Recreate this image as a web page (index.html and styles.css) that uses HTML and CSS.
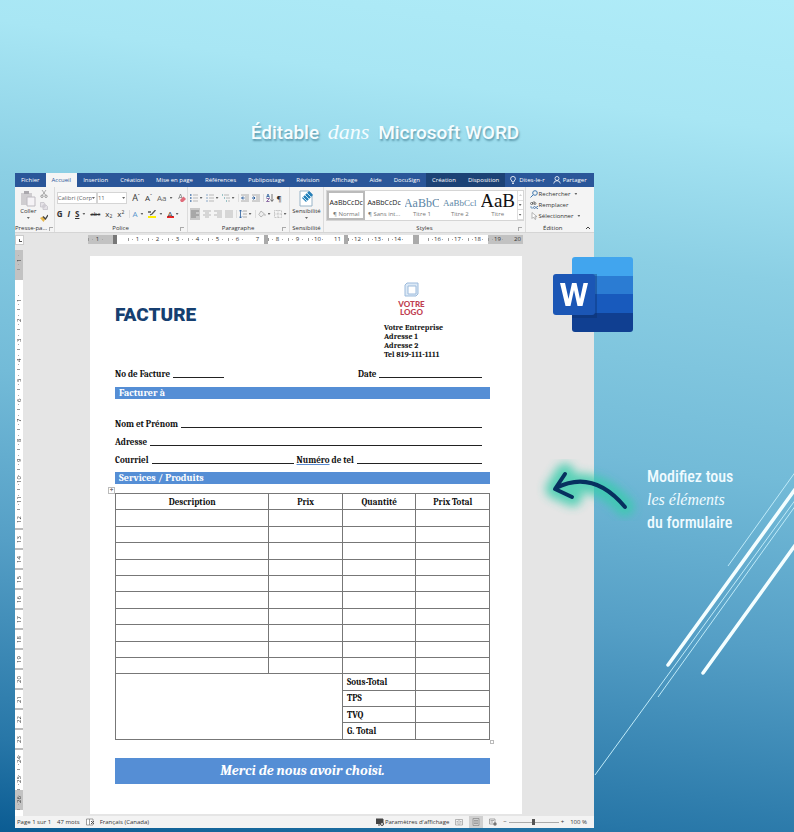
FILE: index.html
```html
<!DOCTYPE html>
<html lang="fr">
<head>
<meta charset="UTF-8">
<meta name="viewport" content="width=device-width, initial-scale=1.0">
<title>Facture éditable dans Microsoft WORD</title>
<link rel="stylesheet" href="styles.css">
</head>
<body>
<header class="banner">
    <h1>Éditable <em>dans</em> Microsoft WORD</h1>
</header>
<main class="stage">
    <div class="word">
        <nav class="tabs">
            <a href="#">Fichier</a>
            <a href="#" class="active">Accueil</a>
            <a href="#">Insertion</a>
            <a href="#">Création</a>
            <a href="#">Mise en page</a>
            <a href="#">Références</a>
            <a href="#">Publipostage</a>
            <a href="#">Révision</a>
            <a href="#">Affichage</a>
            <a href="#">Aide</a>
            <a href="#">DocuSign</a>
            <a href="#" class="context">Création</a>
            <a href="#" class="context">Disposition</a>
            <a href="#" class="tell"><svg class="icon" viewBox="0 0 8 8"><path d="M3 6V5Q1.600 4 1.600 2.800A2.400 2.400 0 0 1 6.400 2.800Q6.400 4 5 5V6ZM3 7.500H5" fill="none" stroke="#fff" stroke-width=".8"/></svg>Dites-le-r</a>
            <a href="#" class="share"><svg class="icon" viewBox="0 0 8 8"><circle cx="4" cy="2.500" r="2" fill="none" stroke="#fff" stroke-width=".8"/><path d="M.7 7.500Q1 4.700 4 4.700Q7 4.700 7.300 7.500" fill="none" stroke="#fff" stroke-width=".8"/></svg>Partager</a>
        </nav>

        <!-- Ruban -->
        <div class="ribbon">
            <section class="group clipboard">
                <div class="tools">
                    <button class="big"><svg viewBox="0 0 16 17"><path d="M1 3H12V15H1Z" fill="#cfcdd0"/><path d="M4 1H9V4H4Z" fill="#aaa8ad"/><path d="M7 7H15V16H7Z" fill="#f5f3f6" stroke="#bdbac0"/></svg><span>Coller</span><i class="drop"></i></button>
                    <div class="stack">
                        <button aria-label="Couper"><svg class="icon" viewBox="0 0 8 8"><path d="M2 0L5.500 5M6 0L2.500 5" stroke="#999" stroke-width=".8"/><circle cx="2" cy="6.300" r="1.200" fill="none" stroke="#999"/><circle cx="6" cy="6.300" r="1.200" fill="none" stroke="#999"/></svg></button>
                        <button aria-label="Copier"><svg class="icon" viewBox="0 0 8 8"><path d="M.5 .5H4L5 2V5H.5ZM3 3H6L7.500 4.500V7.500H3Z" fill="#e4e1e6" stroke="#c0bdc4" stroke-width=".7"/></svg></button>
                        <button aria-label="Reproduire la mise en forme"><svg class="icon" viewBox="0 0 8 8"><path d="M0 4L3 2.500L5.500 5L3.500 8Z" fill="#e5b54b"/><path d="M3 2.500L5.500 5L8 1" fill="none" stroke="#444" stroke-width="1.400"/></svg></button>
                    </div>
                </div>
                <h2 class="launch">Presse-pa...</h2>
            </section>
            <section class="group font">
                <div class="tools rows">
                    <div class="row">
                        <span class="pick family"><select aria-label="Police"><option>Calibri (Corps)</option></select></span>
                        <span class="pick size"><select aria-label="Taille de police"><option>11</option></select></span>
                        <button class="grow">A<sup>ˆ</sup></button>
                        <button class="shrink">A<sup>ˇ</sup></button>
                        <button class="case">Aa<i class="drop"></i></button>
                        <button aria-label="Effacer la mise en forme"><svg class="icon" viewBox="0 0 8 8"><path d="M.5 5L2.500 0L4.500 5M1.200 3.500H3.800" fill="none" stroke="#777" stroke-width=".7"/><path d="M2 6L5.500 2.500L8 5L5 8H3Z" fill="#df6c7b"/></svg></button>
                    </div>
                    <div class="row">
                        <button><b>G</b></button>
                        <button><b><em>I</em></b></button>
                        <button><b><u>S</u></b><i class="drop"></i></button>
                        <button class="strike">abc</button>
                        <button>x<sub>2</sub></button>
                        <button>x<sup>2</sup></button>
                        <button class="effect split">A<i class="drop"></i></button>
                        <button aria-label="Surlignage"><svg class="icon" viewBox="0 0 8 8"><path d="M0 6H8V8H0Z" fill="#ffed00"/><path d="M2 5L4 4L7.500 0M0 2H3" stroke="#555" stroke-width="1.300" fill="none"/></svg><i class="drop"></i></button>
                        <button class="ink">A<i class="drop"></i></button>
                    </div>
                </div>
                <h2 class="launch">Police</h2>
            </section>
            <section class="group paragraph">
                <div class="tools rows">
                    <div class="row">
                        <button aria-label="Puces"><svg class="icon" viewBox="0 0 8 8"><path d="M0 1H1.500M0 4H1.500M0 7H1.500" stroke="#3f6fa8" stroke-width="1.500"/><path d="M3 1H8M3 4H8M3 7H8" stroke="#aaa" stroke-width=".8"/></svg><i class="drop"></i></button>
                        <button aria-label="Numérotation"><svg class="icon" viewBox="0 0 8 8"><path d="M1 0V2M1 3V5M1 6V8" stroke="#6f95bd" stroke-width=".8"/><path d="M3 1H8M3 4H8M3 7H8" stroke="#aaa" stroke-width=".8"/></svg><i class="drop"></i></button>
                        <button aria-label="Liste à plusieurs niveaux"><svg class="icon" viewBox="0 0 8 8"><path d="M0 1H1M2 4H3M4 7H5" stroke="#3f8f98" stroke-width="1.200"/><path d="M2 1H7M4 4H8M6 7H8" stroke="#aaa" stroke-width=".8"/></svg><i class="drop"></i></button>
                        <button class="split" aria-label="Diminuer le retrait"><svg class="icon" viewBox="0 0 8 8"><path d="M0 1H8M4 3H8M4 5H8M0 7H8" stroke="#999" stroke-width=".8"/><path d="M3.500 4H1M2 2.500L.5 4L2 5.500" stroke="#285d9c" fill="none"/></svg></button>
                        <button aria-label="Augmenter le retrait"><svg class="icon" viewBox="0 0 8 8"><path d="M0 1H8M4 3H8M4 5H8M0 7H8" stroke="#999" stroke-width=".8"/><path d="M0 4H2.500M1.500 2.500L3 4L1.500 5.500" stroke="#285d9c" fill="none"/></svg></button>
                        <button class="split" aria-label="Trier"><svg class="icon" viewBox="0 0 8 8"><path d="M.5 3.500L2 0L3.500 3.500M1 2.500H3" fill="none" stroke="#285d9c" stroke-width=".8"/><path d="M.5 4.500H3.500L.5 7.500H3.500" fill="none" stroke="#744b91" stroke-width=".8"/><path d="M6 0V7M4.500 5.500L6 7.500L7.500 5.500" stroke="#555" fill="none" stroke-width=".8"/></svg></button>
                        <button class="pilcrow">¶</button>
                    </div>
                    <div class="row">
                        <button class="on" aria-label="Aligner à gauche"><svg class="icon" viewBox="0 0 8 8"><path d="M0 1H8M0 3H5M0 5H8M0 7H5" stroke="#777" stroke-width=".8"/></svg></button>
                        <button aria-label="Centrer"><svg class="icon" viewBox="0 0 8 8"><path d="M0 1H8M2 3H6M0 5H8M2 7H6" stroke="#aaa" stroke-width=".8"/></svg></button>
                        <button aria-label="Aligner à droite"><svg class="icon" viewBox="0 0 8 8"><path d="M0 1H8M3 3H8M0 5H8M3 7H8" stroke="#aaa" stroke-width=".8"/></svg></button>
                        <button aria-label="Justifier"><svg class="icon" viewBox="0 0 8 8"><path d="M0 1H8M0 3H8M0 5H8M0 7H8" stroke="#aaa" stroke-width=".8"/></svg></button>
                        <button class="split" aria-label="Interligne"><svg class="icon" viewBox="0 0 8 8"><path d="M1.500 0V8M0 1.500L1.500 0L3 1.500M0 6.500L1.500 8L3 6.500" stroke="#285d9c" fill="none" stroke-width=".8"/><path d="M4 1H8M4 4H8M4 7H8" stroke="#999" stroke-width=".8"/></svg><i class="drop"></i></button>
                        <button class="split" aria-label="Trame de fond"><svg class="icon" viewBox="0 0 8 8"><path d="M3 1L6.500 4L3 7L.8 4.500ZM7 4V6" fill="#eee" stroke="#aaa" stroke-width=".8"/></svg><i class="drop"></i></button>
                        <button aria-label="Bordures"><svg class="icon" viewBox="0 0 8 8"><path d="M.5 .5H7.500V7.500H.5ZM4 0V8M0 4H8" fill="none" stroke="#bbb" stroke-width=".8" stroke-dasharray="1 .5"/></svg><i class="drop"></i></button>
                    </div>
                </div>
                <h2 class="launch">Paragraphe</h2>
            </section>
            <section class="group sensitivity">
                <div class="tools">
                    <button class="big"><svg viewBox="0 0 16 17"><path d="M2 1H11L14 4V16H2Z" fill="#fff" stroke="#98b4c8"/><path d="M4 8L11 1L15 5L8 12Z" fill="#2680b9"/><path d="M5 7L9 11M7 5L11 9M9 3L13 7" stroke="#bde5f5"/></svg><span>Sensibilité</span><i class="drop"></i></button>
                </div>
                <h2>Sensibilité</h2>
            </section>
            <section class="group styles">
                <div class="tools">
                    <div class="gallery">
                        <button class="selected"><span>AaBbCcDc</span><small>¶ Normal</small></button>
                        <button><span>AaBbCcDc</span><small>¶ Sans int...</small></button>
                        <button class="title1"><span>AaBbC</span><small>Titre 1</small></button>
                        <button class="title2"><span>AaBbCcl</span><small>Titre 2</small></button>
                        <button class="title"><span>AaB</span><small>Titre</small></button>
                        <div class="scroll">
                            <button aria-label="Monter"><i class="drop up faded"></i></button>
                            <button aria-label="Descendre"><i class="drop"></i></button>
                            <button aria-label="Autres styles"><i class="drop"></i></button>
                        </div>
                    </div>
                </div>
                <h2 class="launch">Styles</h2>
            </section>
            <section class="group edit">
                <div class="tools rows">
                    <button><svg class="icon" viewBox="0 0 8 8"><circle cx="5" cy="3" r="2.300" fill="none" stroke="#3f78af"/><path d="M3.200 4.800L.5 7.500" stroke="#3f78af"/></svg>Rechercher<i class="drop"></i></button>
                    <button><svg class="icon" viewBox="0 0 8 8"><circle cx="1.500" cy="2.500" r="1" fill="none" stroke="#555" stroke-width=".7"/><path d="M2.500 1V3.500M4 0V3.500" stroke="#555" stroke-width=".7"/><circle cx="5" cy="2.500" r="1" fill="none" stroke="#555" stroke-width=".7"/><circle cx="4.500" cy="6.500" r="1" fill="none" stroke="#285d9c" stroke-width=".7"/><path d="M8 5.500Q6.500 5 6.500 6.500Q6.500 8 8 7.500" fill="none" stroke="#285d9c" stroke-width=".7"/><path d="M1 5V7H3" fill="none" stroke="#3f78af" stroke-width=".7"/></svg>Remplacer</button>
                    <button><svg class="icon" viewBox="0 0 8 8"><path d="M2 .5V6.500L3.500 5L5 7.500L6 7L4.800 4.700H7Z" fill="#fff" stroke="#999" stroke-width=".7"/></svg>Sélectionner<i class="drop"></i></button>
                </div>
                <h2>Édition</h2>
            </section>
            <button class="collapse" aria-label="Réduire le ruban"><svg viewBox="0 0 6 4"><path d="M1 3L3 1L5 3" fill="none" stroke="#444"/></svg></button>
        </div>

        <!-- Règle horizontale -->
        <div class="ruler-bar">
            <span class="corner"></span>
            <div class="ruler">
                <span class="out">1</span><span class="mark">&nbsp;</span><span>1</span><span>2</span><span>3</span><span>4</span><span>5</span><span>6</span><span class="stop">7</span><span>8</span><span>9</span><span>10</span><span class="stop">11</span><span>12</span><span>13</span><span>14</span><span class="notch">&nbsp;</span><span>16</span><span>17</span><span>18</span><span class="out">19</span><span class="end">20</span>
            </div>
        </div>

        <div class="workspace">
            <div class="ruler-side">
                <span class="out">1</span><span class="first">&nbsp;</span><span>1</span><span>2</span><span>3</span><span>4</span><span>5</span><span>6</span><span>7</span><span>8</span><span>9</span><span>10</span><span>11</span><span class="rowmark">12</span><span class="rowmark">13</span><span class="rowmark">14</span><span class="rowmark">15</span><span class="rowmark">16</span><span class="rowmark">17</span><span class="rowmark">18</span><span class="rowmark">19</span><span class="rowmark">20</span><span class="rowmark">21</span><span class="rowmark">22</span><span class="rowmark">23</span><span>24</span><span>25</span><span class="out">26</span>
            </div>
            <div class="desk">
                <article class="page">
                    <div class="letterhead">
                        <h2>FACTURE</h2>
                        <div class="company">
                            <div class="logo">
                                <svg viewBox="0 0 15 15"><path d="M1 3L3 1H14V12L12 14H1Z" fill="#dce9f6" stroke="#9dbbdc"/><path d="M4 4H12V12H4Z" fill="#fff" stroke="#9dbbdc"/></svg>
                                <strong>VOTRE<br>LOGO</strong>
                            </div>
                            <address>Votre Entreprise<br>Adresse 1<br>Adresse 2<br>Tel 819-111-1111</address>
                        </div>
                    </div>
                    <form>
                        <div class="line spread">
                            <div class="field number"><label for="numero">No de Facture</label><input id="numero" type="text"></div>
                            <div class="field date"><label for="date">Date</label><input id="date" type="text"></div>
                        </div>
                        <h3>Facturer à</h3>
                        <div class="customer">
                            <div class="line field"><label for="nom">Nom et Prénom</label><input id="nom" type="text"></div>
                            <div class="line field"><label for="adresse">Adresse</label><input id="adresse" type="text"></div>
                            <div class="line">
                                <div class="field mail"><label for="courriel">Courriel</label><input id="courriel" type="text"></div>
                                <div class="field phone"><label for="tel"><u>Numéro</u> de tel</label><input id="tel" type="text"></div>
                            </div>
                        </div>
                        <h3>Services / Produits</h3>
                        <div class="items">
                            <span class="handle">+</span>
                            <table>
                                <colgroup><col class="wide"><col><col><col></colgroup>
                                <tbody>
                                    <tr><th>Description</th><th>Prix</th><th>Quantité</th><th>Prix Total</th></tr>
                                    <tr><td></td><td></td><td></td><td></td></tr>
                                    <tr><td></td><td></td><td></td><td></td></tr>
                                    <tr><td></td><td></td><td></td><td></td></tr>
                                    <tr><td></td><td></td><td></td><td></td></tr>
                                    <tr><td></td><td></td><td></td><td></td></tr>
                                    <tr><td></td><td></td><td></td><td></td></tr>
                                    <tr><td></td><td></td><td></td><td></td></tr>
                                    <tr><td></td><td></td><td></td><td></td></tr>
                                    <tr><td></td><td></td><td></td><td></td></tr>
                                    <tr><td></td><td></td><td></td><td></td></tr>
                                    <tr><td colspan="2" rowspan="4"></td><th class="total">Sous-Total</th><td></td></tr>
                                    <tr><th class="total">TPS</th><td></td></tr>
                                    <tr><th class="total">TVQ</th><td></td></tr>
                                    <tr><th class="total">G. Total</th><td></td></tr>
                                </tbody>
                            </table>
                            <span class="resize"></span>
                        </div>
                    </form>
                    <p class="thanks">Merci de nous avoir choisi.</p>
                </article>
            </div>
        </div>

        <footer class="status">
            <span>Page 1 sur 1</span>
            <span>47 mots</span>
            <svg class="icon" viewBox="0 0 8 8"><path d="M.5 1H3.500V7H.5ZM3.500 1H7V7H3.500" fill="#fff" stroke="#777" stroke-width=".7"/><path d="M5 3L8 6M8 3L5 6" stroke="#555"/></svg>
            <span class="lang">Français (Canada)</span>
            <button class="display"><svg class="icon" viewBox="0 0 8 8"><path d="M0 1H7V5.500H0ZM2 7H4" fill="#444" stroke="#444"/><circle cx="6" cy="6" r="1.500" fill="#eee" stroke="#444"/></svg>Paramètres d'affichage</button>
            <button aria-label="Lecture"><svg class="icon" viewBox="0 0 8 8"><path d="M.5 1.500H4V7H.5ZM4 1.500H7.500V7H4M1.500 3.500H3M1.500 5H3M5 3.500H6.500M5 5H6.500" fill="none" stroke="#999" stroke-width=".7"/></svg></button>
            <button class="on" aria-label="Page"><svg class="icon" viewBox="0 0 8 8"><path d="M1 .5H7V7.500H1ZM2 2.500H6M2 4H6M2 5.500H6" fill="none" stroke="#888" stroke-width=".7"/></svg></button>
            <button aria-label="Web"><svg class="icon" viewBox="0 0 8 8"><path d="M.5 1H6V6H.5ZM1.500 2.500H5M1.500 4H4" fill="none" stroke="#888" stroke-width=".7"/><circle cx="6" cy="6" r="1.700" fill="#777"/></svg></button>
            <div class="zoom"><button>−</button><input type="range" aria-label="Zoom" min="0" max="100" value="50"><button>+</button></div>
            <span class="percent">100 %</span>
        </footer>
    </div>

    <aside class="side">
        <svg class="streaks" viewBox="0 0 200 659" fill="none">
            <path d="M134 393L202 298M1 602L202 326M64 524L202 332" stroke="#bfeaf8" stroke-width="1"/>
            <path d="M74 492L202 315M109 500L202 371" stroke="#f4feff" stroke-width="3.500" stroke-linecap="round"/>
        </svg>
        <svg class="word-logo" viewBox="0 0 82 78">
            <defs><clipPath id="sheet"><rect x="19" y="1" width="61" height="75" rx="3"/></clipPath></defs>
            <g clip-path="url(#sheet)">
                <path d="M19 1H80V20H19Z" fill="#41a5ee"/><path d="M19 20H80V38H19Z" fill="#2b7cd3"/>
                <path d="M19 38H80V57H19Z" fill="#185abd"/><path d="M19 57H80V76H19Z" fill="#103f91"/>
                <path d="M19 18H44V62H19Z" fill="#0b2b62" opacity=".35"/>
            </g>
            <rect x="0" y="18" width="42" height="41" rx="3" fill="#1b56b5"/>
            <path d="M7 27H12L15.500 43L19 27H23.500L27 43L30.500 27H35L29.500 50H24.500L21 34L17.500 50H12.500Z" fill="#fff"/>
        </svg>
        <svg class="arrow" viewBox="0 0 110 80">
            <defs><filter id="glow" x="-30%" y="-40%" width="160%" height="180%"><feGaussianBlur stdDeviation="5"/></filter></defs>
            <path d="M20 39Q58 21 90 57M30 23L20 39L38 47" fill="none" stroke="#37ccac" stroke-width="19" stroke-linecap="round" stroke-linejoin="round" filter="url(#glow)" opacity=".8"/>
            <path d="M21 38Q58 19 90 57M30 24L20 39L37 47" fill="none" stroke="#07305f" stroke-width="4" stroke-linecap="round" stroke-linejoin="round"/>
        </svg>
        <p>Modifiez tous<br><em>les éléments</em><br>du formulaire</p>
    </aside>
</main>
</body>
</html>
```

FILE: styles.css
```css
* {
    box-sizing: border-box;
}
body {
    margin: 0;
    min-height: 100vh;
    display: flex;
    flex-direction: column;
    font-family: "Open Sans", "Noto Sans", sans-serif;
    font-size: 6px;
    line-height: 8px;
    color: #333;
    background: linear-gradient(188deg, #b0ecf8 0%, #a8e6f4 14%, #8bcfe4 30%, #73bbd8 51%, #559fc6 69%, #2877a8 90%, #0b5c93 100%);
}
h1, h2, h3, p {
    margin: 0;
}
button, input, select {
    font: inherit;
    color: inherit;
    border: 0;
    padding: 0;
    margin: 0;
    background: none;
}
button {
    display: flex;
    align-items: center;
    justify-content: center;
}
.banner {
    padding: 120px 24px 29px 0;
    text-align: center;
}
.banner h1 {
    height: 24px;
    font-family: Roboto, sans-serif;
    font-size: 19px;
    font-weight: 500;
    line-height: 24px;
    color: #f5fdff;
    text-shadow: 1px 2px 2px rgba(50, 110, 130, 0.6);
}
.banner em {
    margin: 0 4px;
    font-family: "Liberation Serif", serif;
    font-size: 22px;
    font-weight: 400;
    text-shadow: none;
}
.stage {
    flex: 1;
    display: flex;
    padding-left: 15px;
}
.word {
    flex: 1;
    min-width: 0;
    margin-bottom: 4px;
    display: flex;
    flex-direction: column;
    background: #e5e5e5;
}
.icon {
    width: 8px;
    height: 8px;
    flex: none;
}
.drop {
    width: 3px;
    height: 2px;
    margin-left: 3px;
    background: #666;
    clip-path: polygon(0 0, 100% 0, 50% 100%);
}
.up {
    transform: rotate(180deg);
}
.faded {
    opacity: 0.3;
}

/* Onglets */
.tabs {
    display: flex;
    height: 14px;
    background: #2a5699;
}
.tabs a {
    display: flex;
    align-items: center;
    padding: 0 6px;
    color: #fff;
    text-decoration: none;
    white-space: nowrap;
}
.tabs .active {
    background: #f5f5f5;
    color: #2a5699;
}
.tabs .context {
    background: #1c4275;
}
.tabs .tell, .tabs .share {
    gap: 2px;
    padding: 0 4px;
}

/* Ruban */
.ribbon {
    position: relative;
    display: flex;
    height: 46px;
    background: #f4f4f4;
    border-bottom: 1px solid #d5d5d5;
}
.group {
    display: flex;
    flex-direction: column;
    min-width: 0;
    border-right: 1px solid #dcdcdc;
}
.group h2 {
    position: relative;
    font-size: 6px;
    font-weight: 400;
    line-height: 8px;
    text-align: center;
    white-space: nowrap;
}
.launch::after {
    content: "";
    position: absolute;
    right: 3px;
    top: 3px;
    width: 3px;
    height: 3px;
    border: 1px solid #aaa;
    border-width: 1px 0 0 1px;
}
.clipboard { flex: 39 1 0; }
.font { flex: 133 1 0; }
.paragraph { flex: 102 1 0; }
.sensitivity { flex: 34 1 0; }
.styles { flex: 202 1 0; }
.edit { flex: 69 1 0; }
.clipboard .launch {
    text-align: left;
}
.clipboard .launch::after {
    right: 1px;
}
.tools {
    display: flex;
    height: 38px;
    padding: 3px 1px 0 2px;
}
.rows {
    flex-direction: column;
    gap: 4px;
    padding-top: 5px;
}
.row {
    display: flex;
    align-items: center;
    gap: 3px;
    height: 12px;
}
.big {
    flex: 1;
    flex-direction: column;
    justify-content: flex-start;
}
.big svg {
    width: 16px;
    height: 17px;
}
.big .drop {
    margin: 2px 0 0;
}
.stack {
    display: flex;
    flex-direction: column;
    gap: 4px;
    padding-right: 5px;
}
.font .row {
    font-size: 8px;
    gap: 5px;
}
.font sup, .font sub {
    font-size: 5px;
    line-height: 4px;
}
.font sub {
    align-self: flex-end;
}
.font sup {
    align-self: flex-start;
}
.pick {
    display: flex;
    align-items: center;
    height: 12px;
    background: #fff;
    border: 1px solid #d5d5d5;
}
.font .pick {
    font-size: 6px;
}
.pick::after {
    content: "";
    width: 3px;
    height: 2px;
    margin-right: 1px;
    flex: none;
    background: #666;
    clip-path: polygon(0 0, 100% 0, 50% 100%);
}
.pick select {
    width: 100%;
    min-width: 0;
    appearance: none;
    color: #666;
}
.family {
    width: 44px;
}
.font .row .size {
    width: 33px;
    margin-left: -5px;
}
.grow {
    font-size: 9px;
}
.case {
    color: #666;
}
.strike {
    font-size: 6px;
    text-decoration: line-through;
}
.effect {
    color: #5b94cd;
}
.ink {
    color: #444;
    background: linear-gradient(#e22, #e22) 0 100% / 7px 2px no-repeat;
}
.split {
    border-left: 1px solid #ddd;
    padding-left: 2px;
}
.paragraph .drop {
    margin-left: 2px;
}
.pilcrow {
    font-size: 8px;
}
.on {
    background: #c9c9c9;
    padding: 2px 1px;
}
.sensitivity .tools {
    padding: 3px 0 0;
}
.gallery {
    display: flex;
    width: 100%;
    height: 31px;
    background: #fff;
    border: 1px solid #d5d5d5;
}
.gallery > button {
    flex: 1;
    min-width: 0;
    flex-direction: column;
    justify-content: flex-end;
    overflow: hidden;
    white-space: nowrap;
    border: 2px solid transparent;
    font-size: 7px;
    color: #222;
}
.gallery .selected {
    border-color: #bbb;
}
.gallery span {
    line-height: 14px;
}
.gallery small {
    font-size: 6px;
    line-height: 8px;
    color: #777;
}
.title1 span, .title2 span, .title span {
    font-family: "Liberation Serif", serif;
    color: #5b86a6;
}
.title1 span {
    font-size: 12px;
}
.title2 span {
    font-size: 9px;
}
.gallery .title span {
    font-size: 19px;
    line-height: 18px;
    color: #111;
}
.scroll {
    width: 6px;
    display: flex;
    flex-direction: column;
    border-left: 1px solid #ddd;
}
.scroll button {
    flex: 1;
    border-bottom: 1px solid #ddd;
}
.scroll .drop {
    margin: 0;
}
.edit .tools {
    gap: 3px;
    padding: 3px 0 0 4px;
}
.edit button {
    justify-content: flex-start;
    gap: 1px;
    height: 8px;
}
.edit {
    border-right: 0;
}
.edit h2 {
    padding-right: 14px;
}
.collapse {
    position: absolute;
    right: 3px;
    bottom: 2px;
}
.collapse svg {
    width: 6px;
    height: 4px;
}

/* Règles */
.ruler-bar {
    display: flex;
    justify-content: center;
    position: relative;
    height: 17px;
    padding-top: 2px;
}
.corner {
    position: absolute;
    left: 0;
    top: 2px;
    width: 9px;
    height: 10px;
    background:
        linear-gradient(#555, #555) 3px 3px / 1px 3px no-repeat,
        linear-gradient(#555, #555) 3px 5px / 3px 1px no-repeat,
        #fff;
    border: 1px solid #ccc;
}
.ruler {
    width: 440px;
    height: 9px;
    display: flex;
    margin-left: 6px;
}
.ruler span {
    flex: 1;
    text-align: center;
    line-height: 9px;
    background:
        linear-gradient(#999, #999) 0 50% / 1px 3px no-repeat,
        linear-gradient(#aaa, #aaa) 25% 50% / 1px 1px no-repeat,
        linear-gradient(#aaa, #aaa) 75% 50% / 1px 1px no-repeat,
        #fff;
}
.ruler .out {
    background-color: #c2c2c2;
}
.ruler .end {
    background: linear-gradient(90deg, #c2c2c2 15px, transparent 15px);
}
.ruler .mark {
    background: linear-gradient(90deg, #c2c2c2 5px, #777 5px, #777 9px, #fff 9px);
}
.ruler .stop {
    background: linear-gradient(90deg, #fff 16px, #aaa 16px);
}
.ruler .notch {
    background: linear-gradient(90deg, #fff 5px, #aaa 5px, #aaa 11px, #fff 11px);
}
.workspace {
    flex: 1;
    display: flex;
}
.ruler-side {
    width: 8px;
    display: flex;
    flex-direction: column;
    background: #fff;
}
.ruler-side span {
    height: 20px;
    writing-mode: vertical-rl;
    transform: rotate(180deg);
    text-align: center;
    line-height: 8px;
    background:
        linear-gradient(#999, #999) 50% 0 / 3px 1px no-repeat,
        linear-gradient(#aaa, #aaa) 50% 25% / 1px 1px no-repeat,
        linear-gradient(#aaa, #aaa) 50% 75% / 1px 1px no-repeat;
}
.ruler-side .out {
    background-color: #c2c2c2;
}
.ruler-side .first {
    background: linear-gradient(#fff 50%, #c2c2c2 50%);
}
.ruler-side .rowmark {
    background: linear-gradient(#bbb, #bbb) 0 0 / 8px 2px no-repeat;
}

/* Document */
.desk {
    flex: 1;
    display: flex;
    justify-content: center;
    align-items: flex-start;
    padding: 6px 5px 2px 0;
}
.page {
    width: 100%;
    max-width: 432px;
    padding: 26px 32px 30px 25px;
    background: #fff;
    font-family: Cambria, Caladea, "Liberation Serif", serif;
    font-size: 9px;
    font-weight: 700;
    line-height: 12px;
    color: #111;
}
.letterhead {
    display: flex;
    justify-content: space-between;
    height: 86px;
}
.letterhead h2 {
    padding-top: 21px;
    font-family: Roboto, sans-serif;
    font-size: 19px;
    font-weight: 900;
    line-height: 24px;
    color: #163f70;
}
.company {
    width: 106px;
}
.logo {
    width: 55px;
    display: flex;
    flex-direction: column;
    align-items: center;
    text-align: center;
}
.logo svg {
    width: 15px;
    height: 15px;
}
.logo strong {
    padding: 3px 0 7px;
    font-family: Lato, sans-serif;
    font-size: 8px;
    line-height: 8px;
    color: #bf4050;
}
.company address {
    font-size: 8px;
    font-style: normal;
    line-height: 9px;
}
.line {
    display: flex;
    height: 12px;
    margin: 0 8px 6px 0;
}
.spread {
    justify-content: space-between;
    margin-bottom: 7px;
}
.field {
    display: flex;
    align-items: flex-start;
    gap: 3px;
    white-space: nowrap;
}
.field input {
    flex: 1;
    min-width: 0;
    height: 10px;
    border-bottom: 1px solid #222;
}
.number {
    width: 109px;
}
.date {
    width: 124px;
}
.mail {
    flex: 180 1 0;
}
.phone {
    flex: 187 1 0;
    padding-left: 3px;
}
.phone u {
    text-decoration-color: #5b8bd0;
}
.page h3 {
    height: 12px;
    padding-left: 4px;
    font-size: 10px;
    line-height: 12px;
    color: #fff;
    background: #558ed5;
}
.customer {
    padding-top: 19px;
}
.items {
    position: relative;
    padding: 9px 0 18px;
}
.handle {
    position: absolute;
    left: -7px;
    top: 3px;
    width: 7px;
    height: 7px;
    border: 1px solid #bbb;
    font-size: 7px;
    line-height: 5px;
    text-align: center;
    color: #777;
}
.resize {
    position: absolute;
    right: -4px;
    bottom: 14px;
    width: 4px;
    height: 4px;
    border: 1px solid #bbb;
}
table {
    width: 100%;
    height: 247px;
    table-layout: fixed;
    border-collapse: collapse;
}
.wide {
    width: 41%;
}
tr {
    height: 16px;
}
th, td {
    padding: 0;
    border: 1px solid #777;
}
.total {
    padding-left: 4px;
    text-align: left;
}
.thanks {
    padding: 3px 0;
    text-align: center;
    font-size: 14px;
    font-style: italic;
    line-height: 20px;
    color: #fff;
    background: #558ed5;
}

/* Barre d'état */
.status {
    display: flex;
    align-items: center;
    gap: 6px;
    height: 12px;
    padding: 0 7px 0 2px;
    background: #f3f3f3;
    white-space: nowrap;
}
.lang {
    flex: 1;
}
.status .display {
    gap: 1px;
}
.status .on {
    padding: 2px 3px;
    background: #d0d0d0;
}
.zoom {
    display: flex;
    align-items: center;
    gap: 2px;
}
.zoom input {
    width: 50px;
    height: 8px;
    appearance: none;
    background: linear-gradient(#aaa, #aaa) 0 50% / 100% 1px no-repeat;
}
.zoom input::-webkit-slider-thumb {
    appearance: none;
    width: 3px;
    height: 6px;
    background: #555;
}

/* Colonne de droite */
.side {
    position: relative;
    width: 200px;
    padding: 292px 0 0 53px;
}
.side p {
    position: relative;
    font-family: "Liberation Sans Narrow", "Roboto Condensed", sans-serif;
    font-size: 16px;
    font-weight: 500;
    line-height: 23px;
    color: #f0fbff;
    white-space: nowrap;
}
.side em {
    font-family: "Liberation Serif", serif;
    font-weight: 400;
}
.streaks {
    position: absolute;
    left: 0;
    top: 0;
    width: 200px;
    height: 659px;
}
.word-logo {
    position: absolute;
    left: -41px;
    top: 83px;
    width: 82px;
    height: 78px;
}
.arrow {
    position: absolute;
    left: -59px;
    top: 277px;
    width: 110px;
    height: 80px;
    overflow: visible;
}
```
